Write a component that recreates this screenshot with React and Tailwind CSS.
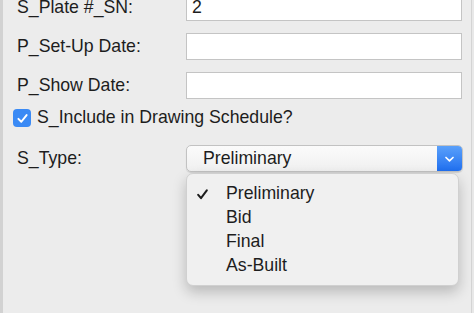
import React from "react"

const font = { fontFamily: '"Helvetica Neue", "Liberation Sans", Arial, sans-serif' }

const fields = [
    { label: 'S_Plate #_SN:', value: '2' },
    { label: 'P_Set-Up Date:', value: '' },
    { label: 'P_Show Date:', value: '' },
]

const options = ['Preliminary', 'Bid', 'Final', 'As-Built']

const App = () => {
    return (
        <div className="relative flex w-[474px] h-[313px] overflow-hidden bg-[#ececec] text-[17.7px] text-[#1d1d1d]" style={font}>
            <div className="w-[3px] shrink-0 bg-[#d2d2d2]"></div>

            <div className="flex-1 flex flex-col -mt-[6px]">
                {fields.map((f, i) => (
                    <div key={i} className="flex items-center h-[27px] mb-[12px]">
                        <p className="w-[183px] pl-[14px] leading-none">{f.label}</p>
                        <div className="w-[276px] h-[27px] bg-white border border-[#c4c4c4] flex items-center px-[5px] leading-none">
                            {f.value}
                        </div>
                    </div>
                ))}

                <div className="flex items-center h-[18px] -mt-[2px] pl-[10px] gap-[6px]">
                    <span className="w-[18px] h-[18px] rounded-[4px] bg-[#3a8af5] flex items-center justify-center">
                        <svg width="13" height="13" viewBox="0 0 12 12" fill="none">
                            <path d="M2.2 6.3 L4.9 9 L9.8 2.8" stroke="white" strokeWidth="1.8" strokeLinecap="round" strokeLinejoin="round" />
                        </svg>
                    </span>
                    <p className="leading-none">S_Include in Drawing Schedule?</p>
                </div>

                <div className="flex items-center h-[27px] mt-[18px]">
                    <p className="w-[183px] pl-[14px] leading-none">S_Type:</p>
                    <div className="relative w-[277px] h-[27px]">
                        <div className="flex h-full rounded-[5px] border border-[#c2c2c2] bg-gradient-to-b from-[#fbfbfb] to-[#f0f0f0] shadow-[0_1px_1px_rgba(0,0,0,0.12)] overflow-hidden">
                            <p className="flex-1 pl-[16px] flex items-center leading-none">Preliminary</p>
                            <div className="w-[25px] flex items-center justify-center bg-gradient-to-b from-[#5aa0fa] to-[#1f6fef]">
                                <svg width="11" height="8" viewBox="0 0 11 8" fill="none">
                                    <path d="M2 2.5 L5.5 5.8 L9 2.5" stroke="white" strokeWidth="1.7" strokeLinecap="round" strokeLinejoin="round" />
                                </svg>
                            </div>
                        </div>

                        <div className="absolute left-0 top-[28px] w-[273px] rounded-[7px] border border-[#d0d0d0] bg-[#f0f0f0] pt-[8px] pb-[7px] shadow-[0_6px_14px_rgba(0,0,0,0.22)]">
                            {options.map((o, i) => (
                                <div key={i} className="flex items-center h-[24px]">
                                    <span className="w-[39px] pl-[10px] flex items-center">
                                        {i === 0 && (
                                            <svg width="11" height="11" viewBox="0 0 11 11" fill="none">
                                                <path d="M1.2 5.8 L4 9.2 L9.8 1.3" stroke="#1d1d1d" strokeWidth="2" strokeLinecap="round" strokeLinejoin="round" />
                                            </svg>
                                        )}
                                    </span>
                                    <p className="leading-none">{o}</p>
                                </div>
                            ))}
                        </div>
                    </div>
                </div>
            </div>

            <div className="w-[1px] shrink-0 bg-[#d4d4d4]"></div>
            <div className="w-[2px] shrink-0 bg-[#e8e8e8]"></div>
        </div>
    )
}

export default App
